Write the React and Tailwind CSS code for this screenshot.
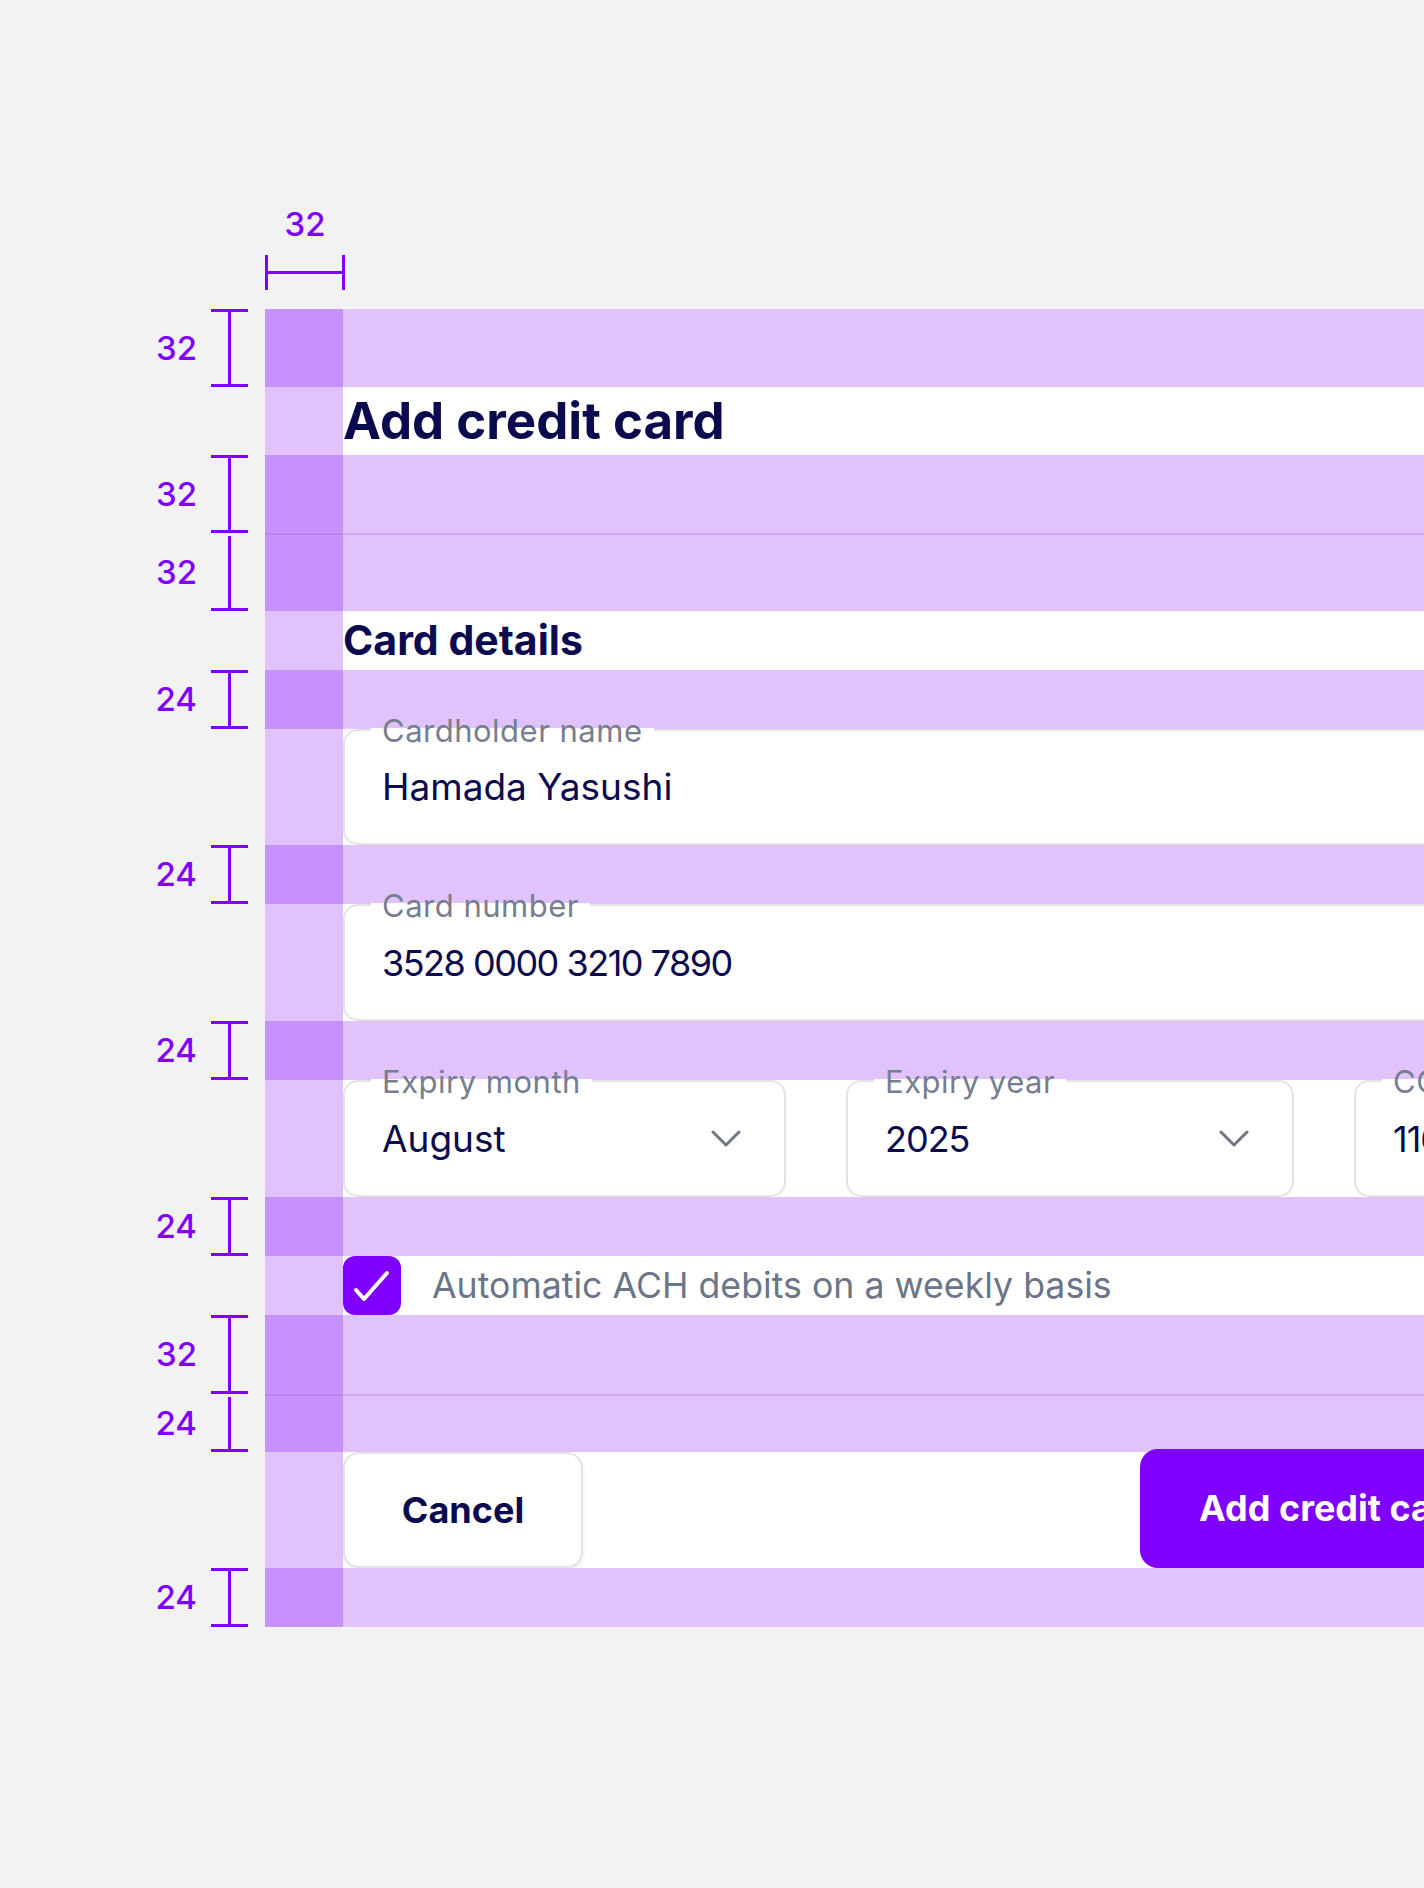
import React from "react";

const NAVY = "text-[#0c0a4e]";

function VBracket({ noTop }) {
  return (
    <div className="flex h-full w-[37px] flex-col items-center">
      {noTop ? <div className="h-[3px]" /> : <div className="h-[3px] w-[37px] bg-[#8000ff]" />}
      <div className="w-[3px] flex-1 bg-[#8000ff]" />
      <div className="h-[3px] w-[37px] bg-[#8000ff]" />
    </div>
  );
}

function Band({ h, label, divider, noTop }) {
  return (
    <div className={`flex shrink-0 ${h}`}>
      <div className="flex w-[265px] shrink-0 items-center justify-end gap-[14px] pr-[17px]">
        <span className="text-[33px] font-medium leading-none text-[#8000ff]">{label}</span>
        <VBracket noTop={noTop} />
      </div>
      <div className={`w-[78px] shrink-0 bg-[#c792fc] ${divider ? "border-t-2 border-[#b783f1]" : ""}`} />
      <div className={`w-[1315px] shrink-0 bg-[#e0c2fd] ${divider ? "border-t-2 border-[#d1abf6]" : ""}`} />
    </div>
  );
}

function Row({ h, children }) {
  return (
    <div className={`flex shrink-0 ${h}`}>
      <div className="w-[265px] shrink-0" />
      <div className="w-[78px] shrink-0 bg-[#e0c2fd]" />
      <div className="w-[1315px] shrink-0 bg-white">
        <div className="h-full w-[1237px]">{children}</div>
      </div>
    </div>
  );
}

function Chevron() {
  return (
    <svg className="ml-auto shrink-0" width="30" height="17" viewBox="0 0 30 17" fill="none">
      <path d="M2 2 L15 15 L28 2" stroke="#717684" strokeWidth="3" strokeLinecap="round" strokeLinejoin="round" />
    </svg>
  );
}

function Field({ label, value, chevron, valueClass = "text-[37px]" }) {
  return (
    <div className="relative flex h-full items-center rounded-[15px] border-2 border-[#e3e3e3] bg-white pl-[37px] pr-[43px]">
      <div className="absolute left-[26px] top-[-21px] flex h-[40px] items-center px-[11px]">
        <div className="absolute inset-x-0 top-[18px] h-[4px] bg-white" />
        <span className="relative whitespace-nowrap text-[31px] leading-none tracking-[0.5px] text-[#767e8f]">{label}</span>
      </div>
      <span className={`whitespace-nowrap ${valueClass} ${NAVY}`}>{value}</span>
      {chevron && <Chevron />}
    </div>
  );
}

export default function App() {
  return (
    <div className="h-[1888px] w-[1424px] overflow-hidden bg-[#f2f2f2] font-['Inter',sans-serif]">
      <div className="pl-[265px] pt-[204px]">
        <div className="w-[80px] text-center text-[33px] font-medium leading-[40px] text-[#8000ff]">32</div>
        <div className="mt-[11px] flex h-[35px] w-[80px] items-center">
          <div className="h-full w-[3px] bg-[#8000ff]" />
          <div className="h-[3px] flex-1 bg-[#8000ff]" />
          <div className="h-full w-[3px] bg-[#8000ff]" />
        </div>
      </div>

      <div className="mt-[19px] flex w-[1658px] flex-col">
        <Band h="h-[78px]" label="32" />
        <Row h="h-[68px]">
          <h1 className={`text-[51px] font-bold leading-[68px] ${NAVY}`}>Add credit card</h1>
        </Row>
        <Band h="h-[78px]" label="32" />
        <Band h="h-[78px]" label="32" divider noTop />
        <Row h="h-[59px]">
          <h2 className={`text-[41px] font-bold leading-[59px] ${NAVY}`}>Card details</h2>
        </Row>
        <Band h="h-[59px]" label="24" />
        <Row h="h-[116px]">
          <Field label="Cardholder name" value="Hamada Yasushi" />
        </Row>
        <Band h="h-[59px]" label="24" />
        <Row h="h-[117px]">
          <Field label="Card number" value="3528 0000 3210 7890" valueClass="text-[36px] tracking-[-1.5px]" />
        </Row>
        <Band h="h-[59px]" label="24" />
        <Row h="h-[117px]">
          <div className="grid h-full grid-cols-[443px_448px_1fr] gap-x-[60px]">
            <Field label="Expiry month" value="August" chevron />
            <Field label="Expiry year" value="2025" chevron valueClass="text-[36px] tracking-[-1px]" />
            <Field label="CCV" value="116" valueClass="text-[36px] tracking-[-1px]" />
          </div>
        </Row>
        <Band h="h-[59px]" label="24" />
        <Row h="h-[59px]">
          <div className="flex h-full items-center gap-[31px]">
            <div className="flex h-[59px] w-[58px] shrink-0 items-center justify-center rounded-[12px] bg-[#8000ff]">
              <svg width="58" height="59" viewBox="0 0 58 59" fill="none">
                <path d="M13 34 L21 43 L44 17" stroke="white" strokeWidth="4" strokeLinecap="round" strokeLinejoin="round" />
              </svg>
            </div>
            <span className="whitespace-nowrap text-[35.7px] text-[#6b7587]">Automatic ACH debits on a weekly basis</span>
          </div>
        </Row>
        <Band h="h-[79px]" label="32" />
        <Band h="h-[58px]" label="24" divider noTop />
        <Row h="h-[116px]">
          <div className="flex h-full items-center justify-between">
            <button className={`h-full w-[240px] rounded-[16px] border-2 border-[#e3e3e3] bg-white text-[36px] font-bold shadow-[0_2px_4px_rgba(0,0,0,0.08)] ${NAVY}`}>
              Cancel
            </button>
            <button className="-mt-[4px] flex h-[119px] w-[440px] items-center rounded-[18px] bg-[#8000ff] pl-[59px] text-[36px] font-bold whitespace-nowrap text-white">
              Add credit card
            </button>
          </div>
        </Row>
        <Band h="h-[59px]" label="24" />
      </div>
    </div>
  );
}
